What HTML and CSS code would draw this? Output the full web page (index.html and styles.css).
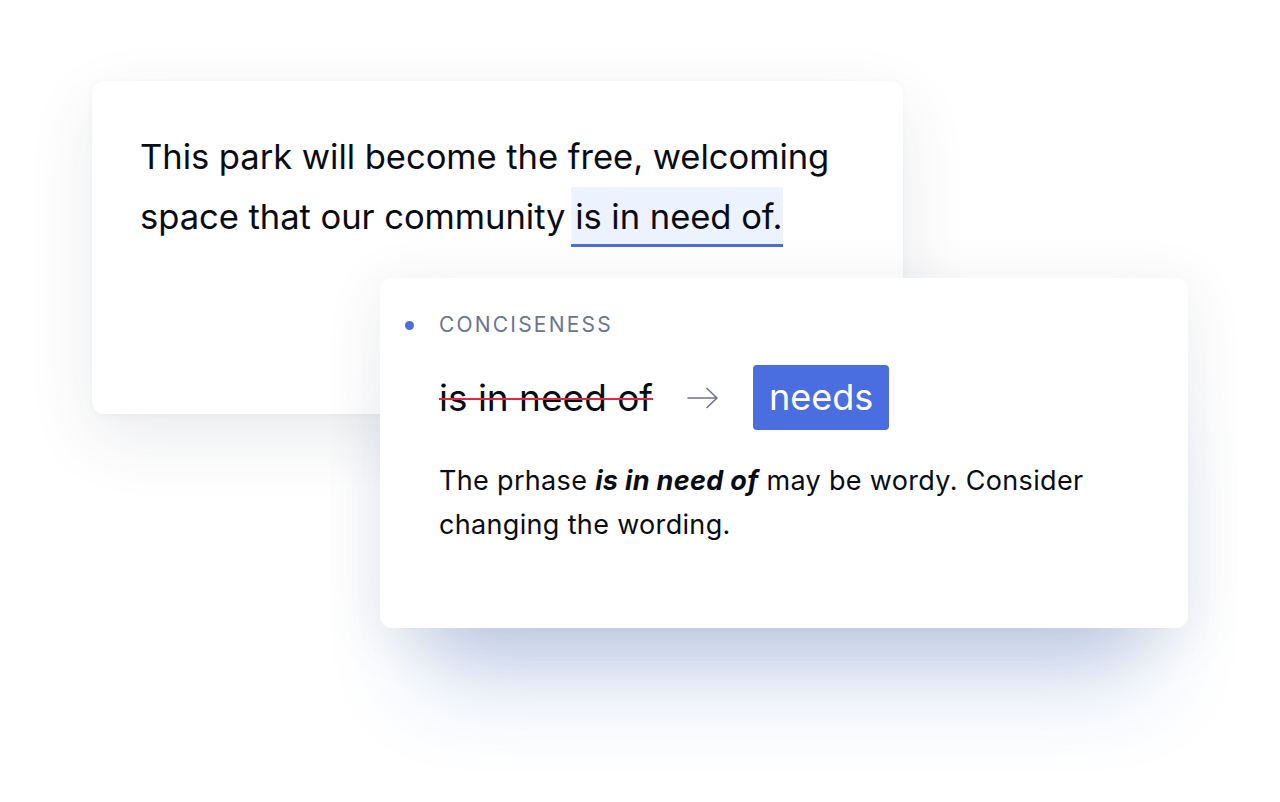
FILE: index.html
```html
<!DOCTYPE html>
<html lang="en">
<head>
<meta charset="utf-8">
<title>Conciseness</title>
<link rel="stylesheet" href="styles.css">
</head>
<body>
<main class="stage">
  <section class="doc-card">
    <p class="doc-text">This park will become the free, welcoming space that our community <span class="flagged">is in need of.</span></p>
  </section>
  <section class="suggest-card">
    <div class="category"><span class="dot"></span><span class="cat-label">CONCISENESS</span></div>
    <div class="replace-row">
      <span class="old">is in need of</span>
      <svg class="arrow" width="32" height="22" viewBox="0 0 32 22" aria-hidden="true"><path d="M1 11 H30 M20 1.5 L30 11 L20 20.5" fill="none" stroke="#6b7393" stroke-width="1.6" stroke-linecap="round" stroke-linejoin="round"/></svg>
      <span class="new">needs</span>
    </div>
    <p class="explain">The prhase <b><i>is in need of</i></b> may be wordy. Consider changing the wording.</p>
  </section>
</main>
</body>
</html>
```
FILE: styles.css
```css
* { box-sizing: border-box; }
html, body { margin: 0; padding: 0; background: #ffffff; }
body {
  width: 1280px;
  height: 802px;
  overflow: hidden;
  font-family: "Inter", "Noto Sans", "Liberation Sans", sans-serif;
  color: #0e101a;
}
.stage {
  padding-top: 81px;
  display: flex;
  flex-direction: column;
}
.doc-card {
  margin-left: 92px;
  width: 811px;
  height: 333px;
  background: #fff;
  border-radius: 12px;
  box-shadow: 0 24px 70px rgba(20, 30, 50, 0.09), 0 2px 8px rgba(20, 30, 50, 0.03);
  padding: 45px 48px 0 48px;
}
.doc-text {
  margin: 0;
  font-size: 34.6px;
  line-height: 60px;
  letter-spacing: -0.05px;
  color: #0a0c14;
}
.flagged {
  background: #edf3fe;
  padding: 8px 0 7px 4px;
  margin-left: -4px;
  border-bottom: 3px solid #4a6ee0;
}
.suggest-card {
  margin-left: 380px;
  margin-top: -136px;
  width: 808px;
  height: 350px;
  background: #fff;
  border-radius: 12px;
  position: relative;
  box-shadow: 0 10px 60px rgba(20, 30, 50, 0.09), 0 95px 90px -45px rgba(80, 120, 200, 0.32);
  padding: 35px 40px 0 25px;
}
.category {
  display: flex;
  align-items: center;
  height: 24px;
}
.dot {
  width: 9px;
  height: 9px;
  border-radius: 50%;
  background: #4a6ee0;
  margin-right: 25px;
}
.cat-label {
  font-size: 21px;
  line-height: 24px;
  letter-spacing: 2.2px;
  color: #6b7393;
}
.replace-row {
  display: flex;
  align-items: center;
  margin-top: 28px;
  margin-left: 34px;
  height: 65px;
}
.old {
  font-size: 37px;
  line-height: 44px;
  color: #0a0c14;
  text-decoration: line-through;
  text-decoration-color: #e0293f;
  text-decoration-thickness: 2px;
}
.arrow {
  margin: 0 34px;
  flex: none;
}
.new {
  background: #4a6ee0;
  color: #fff;
  font-size: 36px;
  line-height: 65px;
  height: 65px;
  padding: 0 16px;
  border-radius: 4px;
}
.explain {
  margin: 29px 0 0 34px;
  font-size: 27px;
  line-height: 44px;
  letter-spacing: 0.33px;
  color: #0a0c14;
  max-width: 700px;
}
.explain b { font-weight: 700; }
```
